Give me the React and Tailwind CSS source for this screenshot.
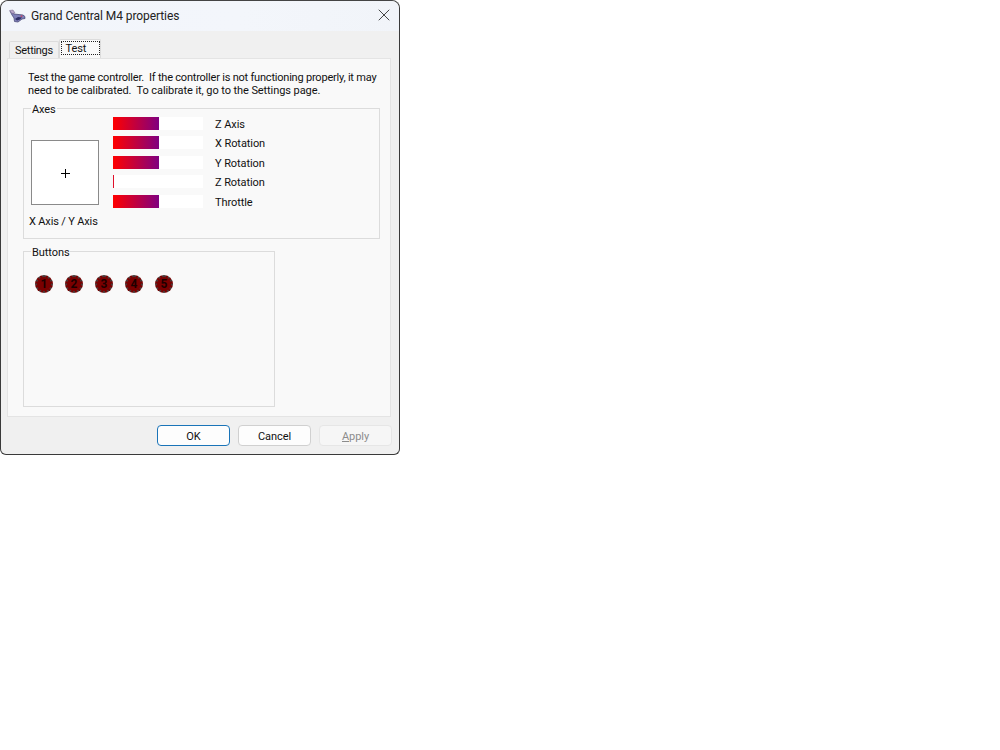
import { X } from 'lucide-react';

const axes = [
    { name: 'Z Axis', full: true, gap: 'mt-0' },
    { name: 'X Rotation', full: true, gap: 'mt-[6px]' },
    { name: 'Y Rotation', full: true, gap: 'mt-[7px]' },
    { name: 'Z Rotation', full: false, gap: 'mt-[6px]' },
    { name: 'Throttle', full: true, gap: 'mt-[7px]' },
];

function ControllerIcon() {
    return (
        <svg width="17" height="14" viewBox="0 0 17 14" className="shrink-0">
            <path d="M1 2 L5 5 L14 6 Q16.5 7 16 9.5 L13 10 L9 13 L5.5 12.5 L5 9 L3 6 Z" fill="#7f7fb8" stroke="#4b4b78" strokeWidth="0.8" />
            <path d="M6 10 L9 8 L13 8.5 L11 10.5 L8 11.5 Z" fill="#2f2f66" />
            <path d="M0.5 1.5 L4 1 L6 4 L3 4.5 Z" fill="#b9a7c9" stroke="#77658a" strokeWidth="0.5" />
            <circle cx="12.5" cy="7.2" r="0.9" fill="#c04a6a" />
        </svg>
    );
}

function PressButton({ n }) {
    return (
        <div className="flex h-[18px] w-[18px] items-center justify-center rounded-full border-2 border-dotted border-[#4a3a3a] bg-[#7a0000] text-[12px] font-bold leading-none text-[#1c0000]">
            {n}
        </div>
    );
}

function DialogButton({ children, className }) {
    return (
        <button className={`flex h-[21px] items-center justify-center rounded-[4px] border pt-[3px] ${className}`}>
            {children}
        </button>
    );
}

export default function App() {
    return (
        <div className="min-h-[750px] bg-white font-['Roboto',sans-serif] text-[11px] tracking-[-0.08px] text-[#111]">
            <div className="flex h-[455px] w-[400px] flex-col rounded-t-[8px] rounded-b-[6px] border border-[#3a3a3a] border-t-[#444] bg-[#f0f0f0]">
                <div className="flex h-[30px] shrink-0 items-center rounded-t-[8px] bg-[linear-gradient(to_right,#f2f5fb,#f3f6fb_60%,#f1f4f9)] pl-[8px] pr-[5px]">
                    <ControllerIcon />
                    <span className="ml-[5px] text-[12px] text-[#222]">Grand Central M4 properties</span>
                    <X className="ml-auto -mt-[2px] h-5 w-5 text-[#222]" strokeWidth={1} />
                </div>

                <div className="flex h-[27px] shrink-0 items-end pl-[8px]">
                    <div className="flex h-[17px] w-[50px] items-center justify-center rounded-t-[2px] border border-b-0 border-[#dcdcdc] bg-[#f0f0f0] pt-[2px] tracking-[-0.3px]">
                        Settings
                    </div>
                    <div className="flex h-[19px] w-[42px] items-start justify-center rounded-t-[2px] border border-b-0 border-[#dcdcdc] bg-[#f9f9f9]">
                        <span className="mt-[1px] flex h-[14px] w-[39px] items-center border border-dotted border-[#222] pl-[4px] leading-none">
                            Test
                        </span>
                    </div>
                </div>

                <div className="ml-[6px] h-[359px] w-[384px] border border-[#e4e4e4] bg-[#f9f9f9] pl-[15px] pt-[12px]">
                    <div className="ml-[5px] whitespace-pre leading-[13px]">
                        <p className="tracking-[-0.21px]">Test the game controller.  If the controller is not functioning properly, it may</p>
                        <p className="tracking-[-0.08px]">need to be calibrated.  To calibrate it, go to the Settings page.</p>
                    </div>

                    <fieldset className="mt-[2px] h-[140px] w-[357px] border border-[#dcdcdc]">
                        <legend className="ml-[7px] px-[1px] pt-[4px] leading-[14px]">Axes</legend>
                        <div className="flex pl-[7px]">
                            <div className="w-[82px] shrink-0">
                                <div className="mt-[23px] flex h-[65px] w-[68px] items-center justify-center border border-[#8a8a8a] bg-white pt-[2px]">
                                    <span className="relative h-[9px] w-[9px]">
                                        <span className="absolute left-0 top-[4px] h-px w-[9px] bg-black" />
                                        <span className="absolute left-[4px] top-0 h-[9px] w-px bg-black" />
                                    </span>
                                </div>
                                <div className="ml-[-2px] mt-[10px] whitespace-nowrap leading-[14px] tracking-[-0.15px]">X Axis / Y Axis</div>
                            </div>
                            <div>
                                {axes.map((axis) => (
                                    <div key={axis.name} className={`flex h-[13px] items-center ${axis.gap}`}>
                                        <div className="h-[13px] w-[90px] bg-white">
                                            {axis.full ? (
                                                <div className="h-full w-[46px] bg-[linear-gradient(to_right,#ff0000,#800080)]" />
                                            ) : (
                                                <div className="h-full w-px bg-[#e0102a]" />
                                            )}
                                        </div>
                                        <span className="ml-[12px] mt-[3px]">{axis.name}</span>
                                    </div>
                                ))}
                            </div>
                        </div>
                    </fieldset>

                    <fieldset className="mt-[3px] h-[165px] w-[252px] border border-[#dcdcdc]">
                        <legend className="ml-[7px] px-[1px] pt-[4px] leading-[14px]">Buttons</legend>
                        <div className="mt-[15px] flex gap-[12px] pl-[11px]">
                            {[1, 2, 3, 4, 5].map((n) => (
                                <PressButton key={n} n={n} />
                            ))}
                        </div>
                    </fieldset>
                </div>

                <div className="mt-[8px] flex gap-[8px] pl-[156px]">
                    <DialogButton className="w-[73px] border-[#1a74b8] bg-[#fdfdfd]">OK</DialogButton>
                    <DialogButton className="w-[73px] border-[#d0d0d0] bg-[#fdfdfd]">Cancel</DialogButton>
                    <DialogButton className="w-[73px] border-[#e6e6e6] bg-[#f6f6f6] text-[#8c8c8c]">
                        <span><span className="underline">A</span>pply</span>
                    </DialogButton>
                </div>
            </div>
        </div>
    );
}
